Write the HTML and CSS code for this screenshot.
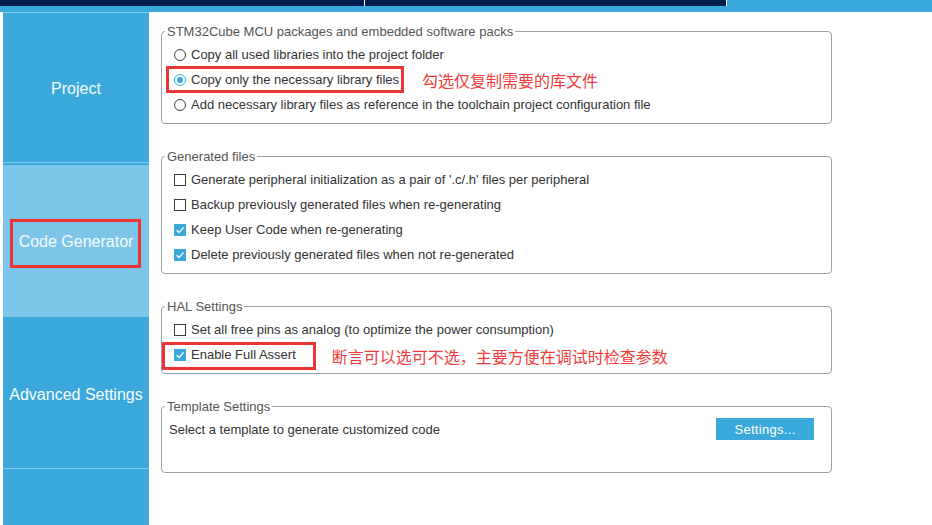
FILE: index.html
```html
<!DOCTYPE html>
<html lang="en">
<head>
<meta charset="utf-8">
<title>Project Manager - Code Generator</title>
<link rel="stylesheet" href="styles.css">
</head>
<body>
<header class="topbar">
  <div class="tabs">
    <div class="tab"><span class="tab-label">Pinout &amp; Configuration</span></div>
    <div class="tab"><span class="tab-label">Clock Configuration</span></div>
    <div class="tab tab-active"><span class="tab-label">Project Manager</span></div>
  </div>
  <div class="strip"></div>
</header>
<div class="layout">
  <nav class="sidebar">
    <div class="side-item side-first"><span>Project</span></div>
    <div class="side-item side-active"><span class="hl hl-side">Code Generator</span></div>
    <div class="side-item side-third"><span>Advanced Settings</span></div>
  </nav>
  <main class="main">
    <fieldset class="group">
      <legend>STM32Cube MCU packages and embedded software packs</legend>
      <div class="group-body">
        <div class="row"><span class="radio"></span><span class="label">Copy all used libraries into the project folder</span></div>
        <div class="row">
          <span class="hl hl-a"><span class="radio radio-on"></span><span class="label">Copy only the necessary library files</span></span>
          <span class="note note-a">勾选仅复制需要的库文件</span>
        </div>
        <div class="row"><span class="radio"></span><span class="label">Add necessary library files as reference in the toolchain project configuration file</span></div>
      </div>
    </fieldset>

    <fieldset class="group">
      <legend>Generated files</legend>
      <div class="group-body">
        <div class="row"><span class="check"></span><span class="label">Generate peripheral initialization as a pair of '.c/.h' files per peripheral</span></div>
        <div class="row"><span class="check"></span><span class="label">Backup previously generated files when re-generating</span></div>
        <div class="row"><span class="check check-on"><svg viewBox="0 0 12 12" width="12" height="12"><path d="M2.6 6.2 L5 8.6 L9.6 3.4" fill="none" stroke="#fff" stroke-width="1.4"/></svg></span><span class="label">Keep User Code when re-generating</span></div>
        <div class="row"><span class="check check-on"><svg viewBox="0 0 12 12" width="12" height="12"><path d="M2.6 6.2 L5 8.6 L9.6 3.4" fill="none" stroke="#fff" stroke-width="1.4"/></svg></span><span class="label">Delete previously generated files when not re-generated</span></div>
      </div>
    </fieldset>

    <fieldset class="group">
      <legend>HAL Settings</legend>
      <div class="group-body">
        <div class="row"><span class="check"></span><span class="label">Set all free pins as analog (to optimize the power consumption)</span></div>
        <div class="row">
          <span class="hl hl-b"><span class="check check-on"><svg viewBox="0 0 12 12" width="12" height="12"><path d="M2.6 6.2 L5 8.6 L9.6 3.4" fill="none" stroke="#fff" stroke-width="1.4"/></svg></span><span class="label">Enable Full Assert</span></span>
          <span class="note note-b">断言可以选可不选，主要方便在调试时检查参数</span>
        </div>
      </div>
    </fieldset>

    <fieldset class="group">
      <legend>Template Settings</legend>
      <div class="group-body group-body-tpl">
        <div class="row row-tpl">
          <span class="label">Select a template to generate customized code</span>
          <button class="btn" type="button">Settings...</button>
        </div>
      </div>
    </fieldset>
  </main>
</div>
</body>
</html>
```

FILE: styles.css
```css
* { box-sizing: border-box; }

html, body {
  margin: 0;
  padding: 0;
  background: #ffffff;
}

body {
  font-family: "Liberation Sans", Arial, "Noto Sans CJK SC", sans-serif;
  font-size: 13px;
  color: #333333;
  width: 932px;
  height: 525px;
  overflow: hidden;
}

/* ---------- top bar ---------- */
.topbar {
  display: flex;
  flex-direction: column;
}

.tabs {
  display: flex;
  gap: 1px;
  height: 6px;
  overflow: hidden;
  background: #ffffff;
}

.tab {
  flex: 0 0 auto;
  width: 364px;
  background: #001f50;
  display: flex;
  justify-content: center;
  color: #ffffff;
  font-weight: bold;
  font-size: 16px;
  line-height: 16px;
  overflow: hidden;
}

.tab + .tab { width: 361px; }

.tab-active {
  flex: 1 0 205px;
  background: #3aa8da;
  justify-content: flex-start;
  padding-left: 112px;
}

.tab-label {
  display: block;
  margin-top: -16px;
  white-space: nowrap;
}

.strip {
  height: 6px;
  background: #3aa8da;
}

/* ---------- layout ---------- */
.layout {
  display: flex;
  height: 513px;
}

.sidebar {
  flex: 0 0 146px;
  margin-left: 3px;
  background: #3aa8da;
  border-top: 1px solid #86cbec;
  display: flex;
  flex-direction: column;
}

.side-item {
  display: flex;
  align-items: center;
  justify-content: center;
  color: #f6fbfe;
  font-size: 16px;
  line-height: 19px;
  white-space: nowrap;
}

.side-first {
  height: 150px;
  padding-top: 2px;
  border-bottom: 1px solid #86cbec;
  margin-bottom: 2px;
}

.side-active {
  height: 152px;
  background: #7dc5e8;
}

.side-third {
  height: 152px;
  padding-top: 3px;
  border-bottom: 1px solid #86cbec;
}

/* ---------- main ---------- */
.main {
  flex: 1;
  padding: 12px 0 0 12px;
  display: flex;
  flex-direction: column;
  gap: 25px;
}

.group {
  margin: 0;
  padding: 0;
  width: 671px;
  border: 1px solid #9ba0a6;
  border-radius: 4px;
  min-width: 0;
}

.group legend {
  font-size: 13px;
  line-height: 15px;
  padding: 0 2px;
  margin-left: 3px;
  color: #555555;
}

.group-body {
  padding: 3px 0 6px 12px;
}

.group-body-tpl {
  padding: 3px 17px 31px 7px;
}

.row {
  display: flex;
  align-items: center;
  height: 25px;
  white-space: nowrap;
}

.row-tpl {
  height: 24px;
  justify-content: space-between;
}

.label {
  margin-left: 5px;
}

.row-tpl .label { margin-left: 0; }

.radio {
  flex: 0 0 12px;
  width: 12px;
  height: 12px;
  border: 1px solid #3b3b3b;
  border-radius: 50%;
  background: #ffffff;
  display: flex;
  align-items: center;
  justify-content: center;
}

.radio-on {
  border-color: #3aa8da;
}

.radio-on::before {
  content: "";
  width: 6px;
  height: 6px;
  border-radius: 50%;
  background: #3aa8da;
}

.check {
  flex: 0 0 12px;
  width: 12px;
  height: 12px;
  border: 1px solid #3b3b3b;
  background: #ffffff;
  display: flex;
}

.check-on {
  border: none;
  background: #3aa8da;
}

/* highlight boxes (annotation overlays) */
.hl {
  position: relative;
  display: inline-flex;
  align-items: center;
  align-self: stretch;
}

.hl::after {
  content: "";
  position: absolute;
  border: 3px solid #ec3434;
  pointer-events: none;
}

.hl-a::after { left: -8px; right: -5px; top: -1px; bottom: -1px; }
.hl-b::after { left: -12px; right: -20px; top: 0; bottom: -3px; }

.hl-side { align-self: auto; }
.hl-side::after { left: -9px; right: -8px; top: -13px; bottom: -17px; }

.note {
  font-family: "Noto Sans CJK SC", "Liberation Sans", sans-serif;
  font-size: 16px;
  color: #f03c3c;
}

.note-a { margin-left: 23px; }
.note-b { margin-left: 36px; margin-top: 3px; }

.btn {
  width: 98px;
  height: 22px;
  border: none;
  background: #3aa8da;
  color: #ffffff;
  font-family: "Liberation Sans", Arial, sans-serif;
  font-size: 13px;
  letter-spacing: 0.3px;
  padding: 0;
}
```
